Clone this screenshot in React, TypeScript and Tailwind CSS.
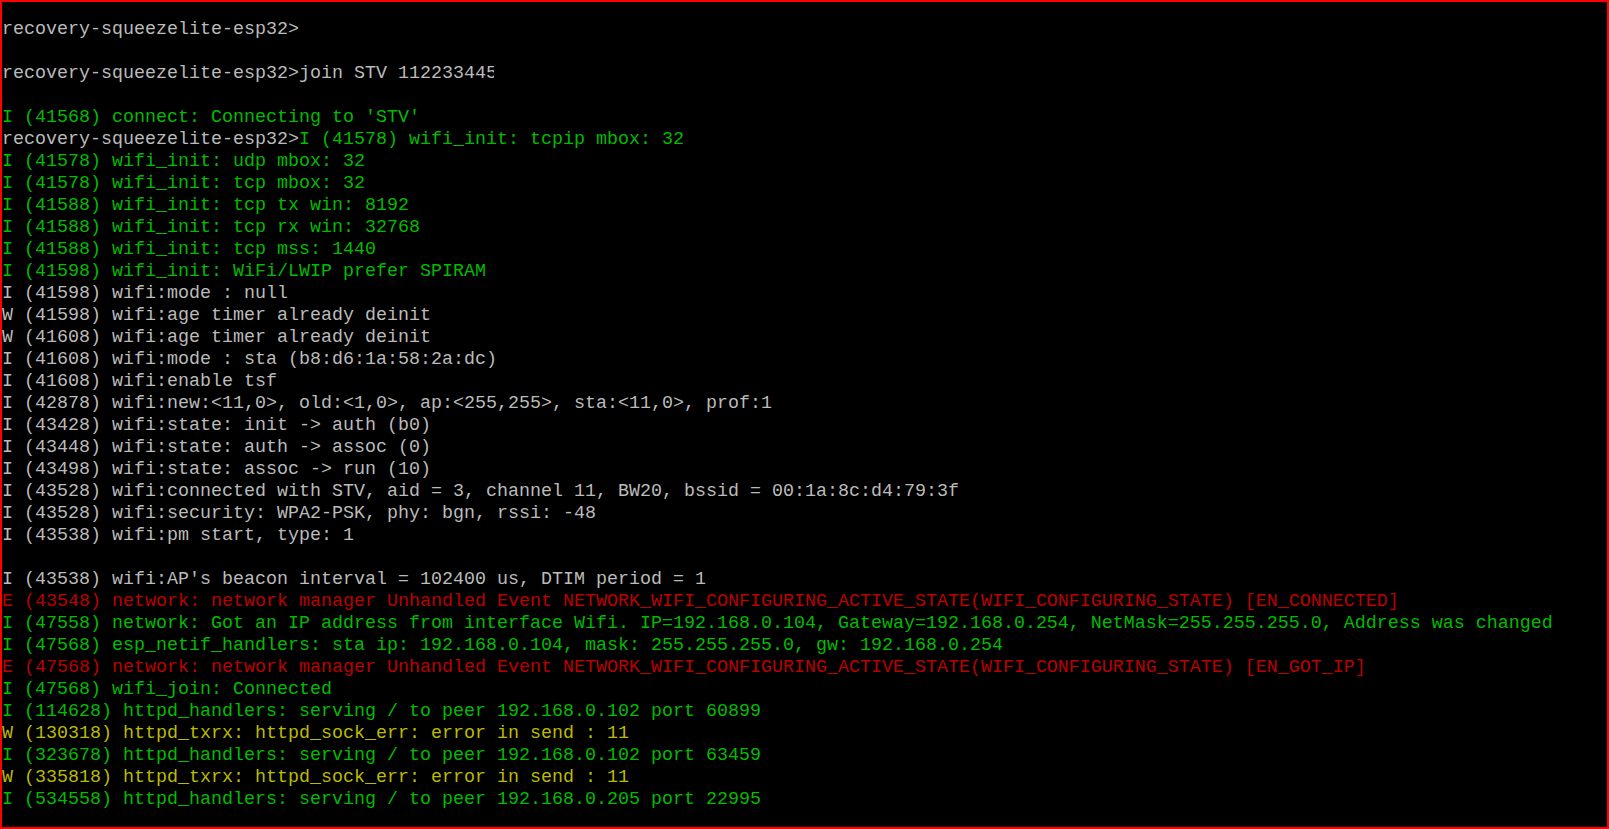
import React from "react";

const G = "text-[#bbbbbb]";
const GR = "text-[#00bb00]";
const R = "text-[#bb0000]";
const Y = "text-[#bbbb00]";

type Seg = [string, string];
const lines: Seg[][] = [
  [[G, "recovery-squeezelite-esp32>"]],
  [],
  [[G, "recovery-squeezelite-esp32>join STV 11223344"]],
  [],
  [[GR, "I (41568) connect: Connecting to 'STV'"]],
  [[G, "recovery-squeezelite-esp32>"], [GR, "I (41578) wifi_init: tcpip mbox: 32"]],
  [[GR, "I (41578) wifi_init: udp mbox: 32"]],
  [[GR, "I (41578) wifi_init: tcp mbox: 32"]],
  [[GR, "I (41588) wifi_init: tcp tx win: 8192"]],
  [[GR, "I (41588) wifi_init: tcp rx win: 32768"]],
  [[GR, "I (41588) wifi_init: tcp mss: 1440"]],
  [[GR, "I (41598) wifi_init: WiFi/LWIP prefer SPIRAM"]],
  [[G, "I (41598) wifi:mode : null"]],
  [[G, "W (41598) wifi:age timer already deinit"]],
  [[G, "W (41608) wifi:age timer already deinit"]],
  [[G, "I (41608) wifi:mode : sta (b8:d6:1a:58:2a:dc)"]],
  [[G, "I (41608) wifi:enable tsf"]],
  [[G, "I (42878) wifi:new:<11,0>, old:<1,0>, ap:<255,255>, sta:<11,0>, prof:1"]],
  [[G, "I (43428) wifi:state: init -> auth (b0)"]],
  [[G, "I (43448) wifi:state: auth -> assoc (0)"]],
  [[G, "I (43498) wifi:state: assoc -> run (10)"]],
  [[G, "I (43528) wifi:connected with STV, aid = 3, channel 11, BW20, bssid = 00:1a:8c:d4:79:3f"]],
  [[G, "I (43528) wifi:security: WPA2-PSK, phy: bgn, rssi: -48"]],
  [[G, "I (43538) wifi:pm start, type: 1"]],
  [],
  [[G, "I (43538) wifi:AP's beacon interval = 102400 us, DTIM period = 1"]],
  [[R, "E (43548) network: network manager Unhandled Event NETWORK_WIFI_CONFIGURING_ACTIVE_STATE(WIFI_CONFIGURING_STATE) [EN_CONNECTED]"]],
  [[GR, "I (47558) network: Got an IP address from interface Wifi. IP=192.168.0.104, Gateway=192.168.0.254, NetMask=255.255.255.0, Address was changed"]],
  [[GR, "I (47568) esp_netif_handlers: sta ip: 192.168.0.104, mask: 255.255.255.0, gw: 192.168.0.254"]],
  [[R, "E (47568) network: network manager Unhandled Event NETWORK_WIFI_CONFIGURING_ACTIVE_STATE(WIFI_CONFIGURING_STATE) [EN_GOT_IP]"]],
  [[GR, "I (47568) wifi_join: Connected"]],
  [[GR, "I (114628) httpd_handlers: serving / to peer 192.168.0.102 port 60899"]],
  [[Y, "W (130318) httpd_txrx: httpd_sock_err: error in send : 11"]],
  [[GR, "I (323678) httpd_handlers: serving / to peer 192.168.0.102 port 63459"]],
  [[Y, "W (335818) httpd_txrx: httpd_sock_err: error in send : 11"]],
  [[GR, "I (534558) httpd_handlers: serving / to peer 192.168.0.205 port 22995"]],
];

export default function App() {
  return (
    <div className="w-[1609px] h-[829px] bg-black border-2 border-[#ff0000] overflow-hidden">
      <div
        className="pt-[17px] pl-0 text-[18.33px] leading-[22px] whitespace-pre"
        style={{ fontFamily: '"Liberation Mono", "Courier New", monospace' }}
      >
        {lines.map((segs, i) => (
          <div key={i} className="h-[22px]">
            {segs.map(([c, t], j) => (
              <span key={j} className={c}>
                {t}
              </span>
            ))}
            {i === 2 && (
              <span className="inline-block w-[8px] h-[22px] overflow-hidden align-top text-[#bbbbbb]">5</span>
            )}
          </div>
        ))}
      </div>
    </div>
  );
}
